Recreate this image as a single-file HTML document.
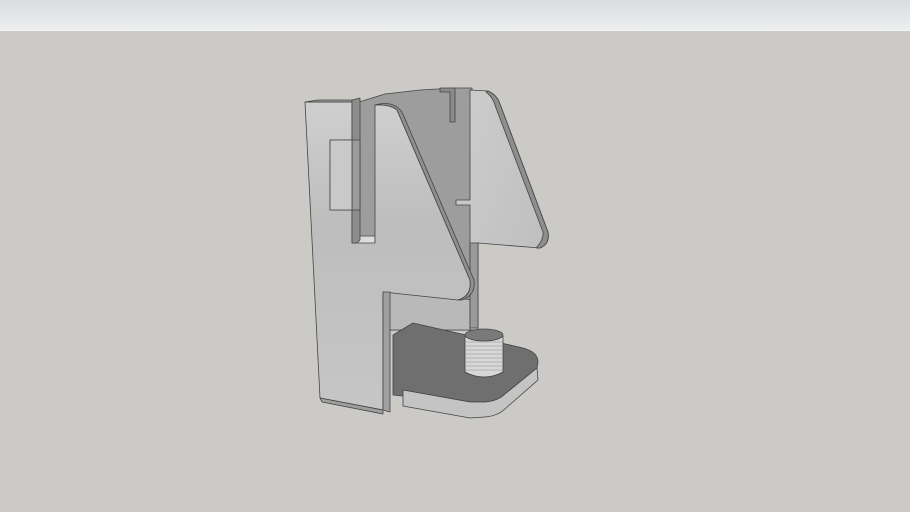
<!DOCTYPE html>
<html><head><style>
html,body{margin:0;padding:0;width:910px;height:512px;overflow:hidden;background:#cbcac7;}
#top{position:absolute;left:0;top:0;width:910px;height:30px;background:linear-gradient(#dadddf,#eceeef);border-bottom:1px solid #f4f5f5;}
svg{position:absolute;left:0;top:0;}
</style></head><body>
<div id="top"></div>
<svg width="910" height="512" viewBox="0 0 910 512">
<defs>
<linearGradient id="lg" x1="0" y1="0" x2="0" y2="1">
<stop offset="0" stop-color="#cfcfcf"/><stop offset="0.4" stop-color="#bdbdbd"/><stop offset="1" stop-color="#c6c6c6"/>
</linearGradient>
<linearGradient id="rg" x1="0" y1="0" x2="1" y2="1">
<stop offset="0" stop-color="#cdcdcd"/><stop offset="1" stop-color="#bcbcbc"/>
</linearGradient>
</defs>
<g stroke="#444" stroke-width="0.8" stroke-linejoin="round">
<!-- back panel -->
<polygon points="356,103 385,94 420,90 455,88 472,88 472,330 383,330 357,243" fill="#9d9d9d"/>
<polygon points="383,292 476,300 476,330 383,330" fill="#b9b9b9"/>
<!-- right plate -->
<path d="M470,90 L488,91 Q497,95 500,104 L548,232 Q550,244 540,248 L478,243 L478,330 L470,330 L470,205 L456,205 L456,200 L470,200 Z" fill="url(#rg)"/>
<path d="M488,91 Q497,95 500,104 L548,232 Q550,244 540,248 L536,248 Q544,240 543,232 L496,108 Q493,97 486,92 Z" fill="#8e8e8e"/>
<polygon points="470,243 478,243 478,328 470,328" fill="#9a9a9a"/>
<polygon points="440,88 455,88 455,122 450,122 450,92 440,92" fill="#8a8a8a"/>
<!-- base top -->
<path d="M393,335 L413,323 L523,348 Q538,352 538,362 L537,368 L505,394 Q498,401 485,402 L470,402 L403,390 L403,396 L393,395 Z" fill="#6f6f6f"/>
<path d="M403,390 L470,402 L485,402 Q498,401 505,394 L537,368 L538,380 L506,408 Q498,416 485,417 L470,418 L403,406 Z" fill="#c4c4c4"/>
<!-- cylinder -->
<path d="M465,336 L465,372 Q484,382 503,372 L503,336 Z" fill="#d8d8d8"/>
<g stroke="#8a8a8a" stroke-width="0.6">
<line x1="465" y1="342" x2="503" y2="342"/><line x1="465" y1="346" x2="503" y2="346"/><line x1="465" y1="350" x2="503" y2="350"/><line x1="465" y1="354" x2="503" y2="354"/><line x1="465" y1="358" x2="503" y2="358"/><line x1="465" y1="362" x2="503" y2="362"/><line x1="465" y1="366" x2="503" y2="366"/><line x1="465" y1="370" x2="503" y2="370"/>
</g>
<ellipse cx="484" cy="335" rx="19" ry="6" fill="#7a7a7a"/>
<polygon points="357,236 375,236 375,246 357,246" fill="#dcdcdc"/>
<!-- front piece -->
<path d="M305,102 L352,102 L352,140 L330,140 L330,210 L352,210 L352,243 L375,243 L375,105 Q390,104 397,110 L470,280 Q472,296 458,300 L383,292 L383,410 L320,398 Z" fill="url(#lg)"/>
<polygon points="305,102 318,100 352,100 352,102" fill="#9a9a9a"/>
<polygon points="352,100 360,98 360,240 357,243 352,243" fill="#8d8d8d"/>
<polygon points="352,140 360,140 360,210 352,210" fill="#9b9b9b"/>
<polygon points="330,140 352,140 352,210 330,210" fill="#c9c9c9"/>
<path d="M375,105 Q393,100 402,112 L474,280 Q476,295 462,300 L458,300 Q472,296 470,280 L397,110 Q390,104 375,105 Z" fill="#8f8f8f"/>
<polygon points="383,292 390,292 390,412 383,410" fill="#a0a0a0"/>
<polygon points="320,398 383,410 383,414 322,402" fill="#9e9e9e"/>
</g>
</svg>
</body></html>
